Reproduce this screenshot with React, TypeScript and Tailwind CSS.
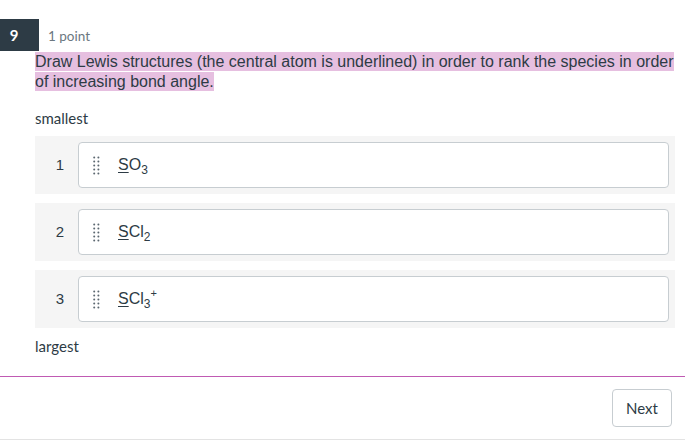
import React from "react";

const Handle = () => (
  <svg width="7" height="19" viewBox="0 0 7 19" className="shrink-0">
    {[1.5, 5.5, 9.5, 13.5, 17.5].map((y) =>
      [1.2, 5.4].map((x) => <circle key={`${x}-${y}`} cx={x} cy={y} r="1" fill="#5b6770" />)
    )}
  </svg>
);

const rows: { n: number; label: React.ReactNode }[] = [
  {
    n: 1,
    label: (
      <>
        <span className="underline underline-offset-2">S</span>O<sub className="text-[12px] relative top-[4px]">3</sub>
      </>
    ),
  },
  {
    n: 2,
    label: (
      <>
        <span className="underline underline-offset-2">S</span>Cl<sub className="text-[12px] relative top-[4px]">2</sub>
      </>
    ),
  },
  {
    n: 3,
    label: (
      <>
        <span className="underline underline-offset-2">S</span>Cl<sub className="text-[12px] relative top-[4px]">3</sub>
        <sup className="text-[11px] relative top-[-7px]">+</sup>
      </>
    ),
  },
];

export default function App() {
  return (
    <div className="w-[685px] h-[440px] bg-white overflow-hidden flex flex-col text-[#2d3b45] font-['Lato',sans-serif]">
      <div className="flex items-center mt-[19px] h-[32px]">
        <div className="w-[39px] h-[32px] bg-[#2d3b45] text-white font-bold text-[15px] flex items-center justify-center pr-[11px]">
          9
        </div>
        <div className="ml-[9px] text-[13.5px] text-[#6b7780] pt-[2px]">1 point</div>
      </div>
      <div className="ml-[35px] w-[645px] mt-[1px] text-[16px] leading-[20px] font-['Liberation_Sans',Arial,sans-serif]">
        <span className="bg-[#e6bfe0] py-[1px] box-decoration-clone">
          Draw Lewis structures (the central atom is underlined) in order to rank the species in order of increasing bond angle.
        </span>
      </div>
      <div className="ml-[35px] mt-[16px] text-[15px] leading-[20px]">smallest</div>
      <div className="ml-[35px] mt-[8px] w-[640px] flex flex-col gap-[9px]">
        {rows.map((r) => (
          <div key={r.n} className="h-[58px] bg-[#f5f5f5] flex items-center pr-[6px]">
            <div className="w-[43px] shrink-0 text-[15px] text-right pr-[14px] font-['Liberation_Sans',Arial,sans-serif]">
              {r.n}
            </div>
            <div className="flex-1 h-[46px] bg-white border border-[#c7cdd1] rounded-[4px] flex items-center pl-[14px]">
              <Handle />
              <div className="ml-[18px] text-[16px] font-['Liberation_Sans',Arial,sans-serif] leading-none">
                {r.label}
              </div>
            </div>
          </div>
        ))}
      </div>
      <div className="ml-[35px] mt-[8px] text-[15px] leading-[20px]">largest</div>
      <div className="mt-[20px] h-[2px] bg-[#c05ab3] w-full" />
      <div className="flex justify-end pr-[13px] mt-[12px]">
        <button className="w-[60px] h-[38px] border border-[#c7cdd1] rounded-[4px] bg-white text-[15px] text-[#2d3b45]">
          Next
        </button>
      </div>
      <div className="mt-[12px] h-[1px] bg-[#e3e3e3] w-full" />
    </div>
  );
}
